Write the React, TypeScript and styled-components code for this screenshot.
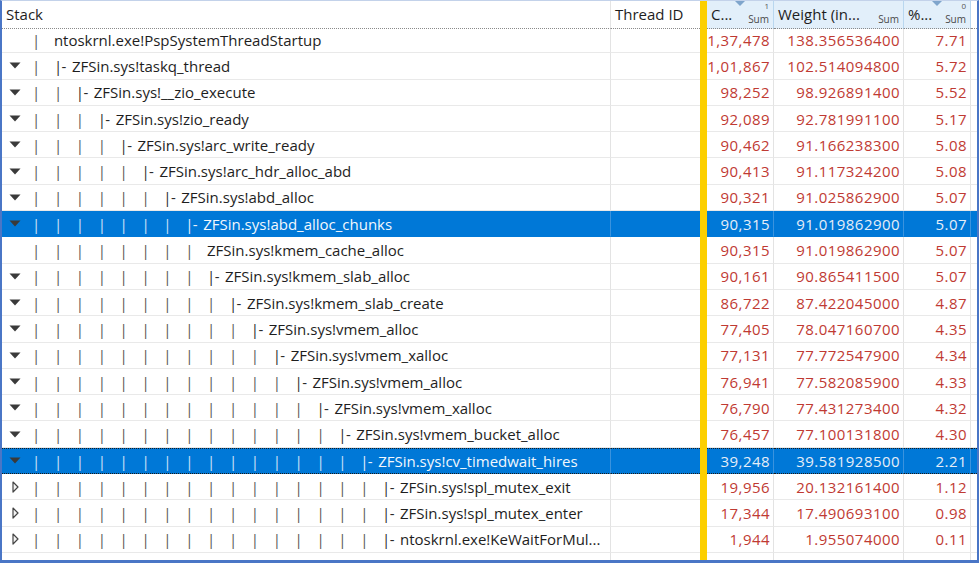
import React from "react";
import styled, { createGlobalStyle, css } from "styled-components";

const Global = createGlobalStyle`
  html, body { margin: 0; padding: 0; background: #fff; overflow: hidden; }
`;

const COLS = "609px 89px 7px 67px 130px 67px 1fr";

const Frame = styled.div`
  width: 979px;
  height: 563px;
  box-sizing: border-box;
  border: 2px solid #4a76c6;
  border-top: 1px solid #c3d2ea;
  border-bottom-width: 3px;
  background: #fff;
  overflow: hidden;
  display: flex;
  flex-direction: column;
  font-family: "Open Sans", "Noto Sans", sans-serif;
  font-size: 15px;
  color: #1e1e1e;
`;

const Header = styled.div`
  position: relative;
  z-index: 1;
  display: grid;
  grid-template-columns: ${COLS};
  height: 28px;
  flex: none;
  background: #fff;
`;

const HeadCell = styled.div<{ $active?: boolean; $sep?: boolean }>`
  position: relative;
  box-sizing: border-box;
  display: flex;
  align-items: center;
  padding-left: 4px;
  padding-bottom: 2px;
  white-space: nowrap;
  overflow: hidden;
  border-bottom: 1px dotted #8a8a8a;
  background: #fff;
  ${(p) => p.$sep && css`border-right: 1px solid #e4e4e4;`}
  ${(p) =>
    p.$active &&
    css`
      background: #e2effa;
      border-right: 1px solid #b9d7ef;
    `}
`;

const YellowCell = styled.div`
  background: #fccf00;
`;

const SortMark = styled.svg`
  position: absolute;
  top: 0;
  left: 50%;
  margin-left: -5px;
  width: 10px;
  height: 5px;
`;

const SupNum = styled.span`
  position: absolute;
  top: 0px;
  right: 4px;
  font-size: 8px;
  line-height: 10px;
  color: #555;
`;

const SumLabel = styled.span`
  position: absolute;
  bottom: 3px;
  right: 4px;
  font-size: 10px;
  line-height: 11px;
  color: #4a4a4a;
`;

const Body = styled.div`
  margin-top: -2px;
  display: flex;
  flex-direction: column;
`;

const Row = styled.div<{ $sel?: boolean }>`
  display: grid;
  grid-template-columns: ${COLS};
  height: 26.3px;
  flex: none;
  background: ${(p) => (p.$sel ? "#0078d7" : "#fff")};
  color: ${(p) => (p.$sel ? "#f2f7fd" : "#1e1e1e")};
`;

const Cell = styled.div<{ $sep?: boolean; $num?: boolean; $focus?: boolean; $sel?: boolean }>`
  box-sizing: border-box;
  display: flex;
  align-items: center;
  white-space: nowrap;
  overflow: hidden;
  border-bottom: 1px solid ${(p) => (p.$sel ? "#0078d7" : "#e9e9e9")};
  ${(p) => p.$sep && css`border-right: 1px solid ${p.$sel ? "#3a93de" : "#e3e3e3"};`}
  ${(p) =>
    p.$num &&
    css`
      justify-content: flex-end;
      padding-right: 3px;
      letter-spacing: 0.45px;
      color: ${p.$sel ? "#e6eef8" : "#bf3a33"};
    `}
  ${(p) =>
    p.$focus &&
    css`
      border-top: 1px dotted #1a1a1a;
      border-bottom: 1px dotted #1a1a1a;
    `}
`;

const Expander = styled.span`
  display: inline-flex;
  align-items: center;
  justify-content: center;
  width: 30px;
  box-sizing: border-box;
  padding-right: 4px;
  flex: none;
`;

const Slot = styled.span<{ $sel?: boolean }>`
  display: inline-block;
  width: 21.88px;
  flex: none;
  color: ${(p) => (p.$sel ? "#cfe3f7" : "#575757")};
`;

const Dash = styled.span<{ $sel?: boolean }>`
  display: inline-block;
  width: 18px;
  flex: none;
  letter-spacing: -0.5px;
  color: ${(p) => (p.$sel ? "#e6f0fb" : "#2a2a2a")};
`;

const Label = styled.span``;

type Exp = "down" | "right" | "none";

interface R {
  bars: number;
  dash: boolean;
  exp: Exp;
  name: string;
  c: string;
  w: string;
  p: string;
  sel?: boolean;
  focus?: boolean;
}

const rows: R[] = [
  { bars: 1, dash: false, exp: "none", name: "ntoskrnl.exe!PspSystemThreadStartup", c: "1,37,478", w: "138.356536400", p: "7.71" },
  { bars: 1, dash: true, exp: "down", name: "ZFSin.sys!taskq_thread", c: "1,01,867", w: "102.514094800", p: "5.72" },
  { bars: 2, dash: true, exp: "down", name: "ZFSin.sys!__zio_execute", c: "98,252", w: "98.926891400", p: "5.52" },
  { bars: 3, dash: true, exp: "down", name: "ZFSin.sys!zio_ready", c: "92,089", w: "92.781991100", p: "5.17" },
  { bars: 4, dash: true, exp: "down", name: "ZFSin.sys!arc_write_ready", c: "90,462", w: "91.166238300", p: "5.08" },
  { bars: 5, dash: true, exp: "down", name: "ZFSin.sys!arc_hdr_alloc_abd", c: "90,413", w: "91.117324200", p: "5.08" },
  { bars: 6, dash: true, exp: "down", name: "ZFSin.sys!abd_alloc", c: "90,321", w: "91.025862900", p: "5.07" },
  { bars: 7, dash: true, exp: "down", name: "ZFSin.sys!abd_alloc_chunks", c: "90,315", w: "91.019862900", p: "5.07", sel: true },
  { bars: 8, dash: false, exp: "none", name: "ZFSin.sys!kmem_cache_alloc", c: "90,315", w: "91.019862900", p: "5.07" },
  { bars: 8, dash: true, exp: "down", name: "ZFSin.sys!kmem_slab_alloc", c: "90,161", w: "90.865411500", p: "5.07" },
  { bars: 9, dash: true, exp: "down", name: "ZFSin.sys!kmem_slab_create", c: "86,722", w: "87.422045000", p: "4.87" },
  { bars: 10, dash: true, exp: "down", name: "ZFSin.sys!vmem_alloc", c: "77,405", w: "78.047160700", p: "4.35" },
  { bars: 11, dash: true, exp: "down", name: "ZFSin.sys!vmem_xalloc", c: "77,131", w: "77.772547900", p: "4.34" },
  { bars: 12, dash: true, exp: "down", name: "ZFSin.sys!vmem_alloc", c: "76,941", w: "77.582085900", p: "4.33" },
  { bars: 13, dash: true, exp: "down", name: "ZFSin.sys!vmem_xalloc", c: "76,790", w: "77.431273400", p: "4.32" },
  { bars: 14, dash: true, exp: "down", name: "ZFSin.sys!vmem_bucket_alloc", c: "76,457", w: "77.100131800", p: "4.30" },
  { bars: 15, dash: true, exp: "down", name: "ZFSin.sys!cv_timedwait_hires", c: "39,248", w: "39.581928500", p: "2.21", sel: true, focus: true },
  { bars: 16, dash: true, exp: "right", name: "ZFSin.sys!spl_mutex_exit", c: "19,956", w: "20.132161400", p: "1.12" },
  { bars: 16, dash: true, exp: "right", name: "ZFSin.sys!spl_mutex_enter", c: "17,344", w: "17.490693100", p: "0.98" },
  { bars: 16, dash: true, exp: "right", name: "ntoskrnl.exe!KeWaitForMul...", c: "1,944", w: "1.955074000", p: "0.11" },
  { bars: 0, dash: false, exp: "right", name: "", c: "", w: "", p: "" },
];

const Tri: React.FC<{ kind: Exp }> = ({ kind }) => {
  if (kind === "down")
    return (
      <svg width="12" height="7" viewBox="0 0 12 7">
        <path d="M0.5 0.5 H11.5 L6 6.5 Z" fill="#3a3a3a" />
      </svg>
    );
  if (kind === "right")
    return (
      <svg width="7" height="12" viewBox="0 0 7 12">
        <path d="M1 1 L6 6 L1 11 Z" fill="#f4f4f4" stroke="#444" strokeWidth="1.2" strokeLinejoin="round" />
      </svg>
    );
  return <svg width="12" height="7" />;
};

const HeadSort = () => (
  <SortMark viewBox="0 0 10 5">
    <path d="M0 0 H10 L5 5 Z" fill="#7fa5cc" />
  </SortMark>
);

export default function App() {
  return (
    <>
      <Global />
      <Frame>
        <Header>
          <HeadCell $sep>Stack</HeadCell>
          <HeadCell>Thread ID</HeadCell>
          <YellowCell />
          <HeadCell $active>
            C...
            <HeadSort />
            <SupNum>1</SupNum>
            <SumLabel>Sum</SumLabel>
          </HeadCell>
          <HeadCell $active>
            Weight (in...
            <SumLabel>Sum</SumLabel>
          </HeadCell>
          <HeadCell $active>
            %...
            <HeadSort />
            <SupNum>0</SupNum>
            <SumLabel>Sum</SumLabel>
          </HeadCell>
          <HeadCell />
        </Header>
        <Body>
          {rows.map((r, i) => (
            <Row key={i} $sel={r.sel}>
              <Cell $sep $focus={r.focus} $sel={r.sel}>
                <Expander>
                  <Tri kind={r.exp} />
                </Expander>
                {Array.from({ length: r.bars }).map((_, k) => (
                  <Slot key={k} $sel={r.sel}>|</Slot>
                ))}
                {r.dash && <Dash $sel={r.sel}>|-</Dash>}
                <Label>{r.name}</Label>
              </Cell>
              <Cell $focus={r.focus} $sel={r.sel} />
              <YellowCell />
              <Cell $sep $num $focus={r.focus} $sel={r.sel}>{r.c}</Cell>
              <Cell $sep $num $focus={r.focus} $sel={r.sel}>{r.w}</Cell>
              <Cell $sep $num $focus={r.focus} $sel={r.sel}>{r.p}</Cell>
              <Cell $focus={r.focus} $sel={r.sel} />
            </Row>
          ))}
        </Body>
      </Frame>
    </>
  );
}
